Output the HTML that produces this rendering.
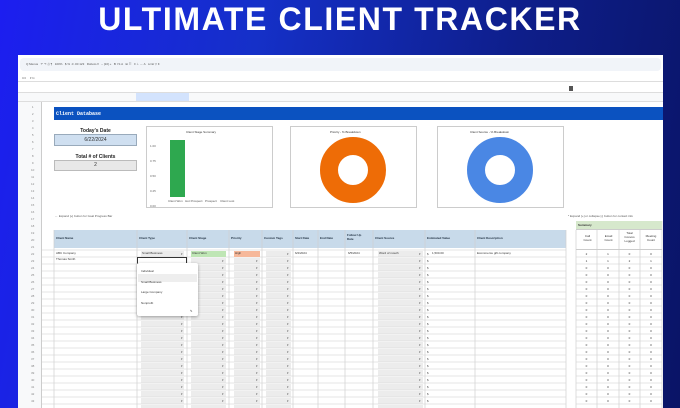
<!DOCTYPE html>
<html><head><style>
*{margin:0;padding:0;box-sizing:border-box}
body{width:680px;height:408px;overflow:hidden;position:relative;font-family:"Liberation Sans",sans-serif;background:linear-gradient(100deg,#1c1ef0 0%,#1530c8 35%,#0e1e8a 70%,#0a1466 100%)}
.a{position:absolute}
.t{font-size:3px;color:#333;white-space:nowrap}
.g{background:repeating-linear-gradient(#ececec 0 6px,#fff 6px 7px)}
</style></head><body>
<div class="a" style="left:0;top:1px;width:680px;text-align:center;color:#fff;font-weight:bold;font-size:32px;letter-spacing:1.6px">ULTIMATE CLIENT TRACKER</div>
<div class="a" style="left:18px;top:55px;width:645px;height:353px;background:#fff"></div>
<div class="a" style="left:20px;top:58px;width:641px;height:13px;background:#f1f4f9;border-radius:4px"></div>
<div class="a t" style="left:26px;top:62px;color:#555">Q Menus &nbsp; ↶ ↷ ⎙ ¶ &nbsp; 100% &nbsp; $ % .0 .00 123 &nbsp; Roboto ▾ &nbsp; − [10] + &nbsp; B I S A &nbsp; ⊞ ☷ &nbsp; ≡ ⊥ ⇔ A &nbsp; ⊟ ⊞ ▽ Σ</div>
<div class="a t" style="left:22px;top:76px;color:#666">C3 &nbsp;&nbsp;&nbsp; ▾ fx</div>
<div class="a" style="left:18px;top:81px;width:645px;height:1px;background:#ddd"></div>
<div class="a" style="left:18px;top:92px;width:645px;height:10px;background:#f8f9fa;border-top:1px solid #ddd;border-bottom:1px solid #ddd"></div>
<div class="a" style="left:136px;top:93px;width:53px;height:8px;background:#d3e3fd"></div>
<div class="a" style="left:18px;top:102px;width:24px;height:306px;background:#f8f9fa;border-right:1px solid #ccc"></div>
<div class="a t" style="left:31px;top:104px;color:#888;line-height:7px;text-align:center">1<br>2<br>3<br>4<br>5<br>6<br>7<br>8<br>9<br>10<br>11<br>12<br>13<br>14<br>15<br>16<br>17<br>18<br>19<br>20<br>21<br>22<br>23<br>24<br>25<br>26<br>27<br>28<br>29<br>30<br>31<br>32<br>33<br>34<br>35<br>36<br>37<br>38<br>39<br>40<br>41<br>42<br>43</div>
<div class="a" style="left:569px;top:86px;width:4px;height:5px;background:#555"></div>
<div class="a" style="left:54px;top:107px;width:609px;height:13px;background:#0b52c0"></div>
<div class="a" style="left:56px;top:111px;font-size:5px;font-weight:bold;color:#fff;font-family:'Liberation Mono',monospace">Client Database</div>
<div class="a" style="left:54px;top:128px;width:83px;text-align:center;font-size:5px;font-weight:bold;color:#222">Today's Date</div>
<div class="a" style="left:54px;top:134px;width:83px;height:12px;background:#cfdff0;border:1px solid #9ab;text-align:center;font-size:5px;line-height:10px;color:#333">6/22/2024</div>
<div class="a" style="left:54px;top:154px;width:83px;text-align:center;font-size:5px;font-weight:bold;color:#222">Total # of Clients</div>
<div class="a" style="left:54px;top:160px;width:83px;height:11px;background:#e8e8e8;border:1px solid #bbb;text-align:center;font-size:5px;line-height:9px;color:#333">2</div>
<div class="a" style="left:146px;top:126px;width:127px;height:82px;border:1px solid #ccc"></div>
<div class="a t" style="left:186px;top:130px">Client Stage Summary</div>
<div class="a t" style="left:150px;top:139px;line-height:15px;color:#666">1.00<br>0.75<br>0.50<br>0.25<br>0.00</div>
<div class="a" style="left:170px;top:140px;width:15px;height:57px;background:#2ea84f"></div>
<div class="a t" style="left:168px;top:199px;color:#555">Client Won &nbsp; Hot Prospect &nbsp; Prospect &nbsp;&nbsp; Client Lost</div>
<div class="a" style="left:290px;top:126px;width:127px;height:82px;border:1px solid #ccc"></div>
<div class="a t" style="left:330px;top:130px">Priority - % Breakdown</div>
<div class="a" style="left:320px;top:137px;width:66px;height:66px;border-radius:50%;border:18px solid #ee6c06"></div>
<div class="a" style="left:437px;top:126px;width:127px;height:82px;border:1px solid #ccc"></div>
<div class="a t" style="left:470px;top:130px">Client Source - % Breakdown</div>
<div class="a" style="left:467px;top:137px;width:66px;height:66px;border-radius:50%;border:18px solid #4a87e4"></div>
<div class="a t" style="left:55px;top:214px;color:#555">← Expand [+] button for Goal Progress Bar</div>
<div class="a t" style="left:568px;top:214px;color:#555">* Expand [+] or collapse [-] button for contact info</div>
<div class="a" style="left:54px;top:230px;width:512px;height:18px;background:#c8daea"></div>
<div class="a g" style="left:141px;top:251px;width:43px;height:157px"></div>
<div class="a g" style="left:191px;top:251px;width:35px;height:157px"></div>
<div class="a g" style="left:234px;top:251px;width:26px;height:157px"></div>
<div class="a g" style="left:266px;top:251px;width:25px;height:157px"></div>
<div class="a g" style="left:378px;top:251px;width:45px;height:157px"></div>
<svg class="a" style="left:0;top:0" width="680" height="408">
<g stroke="#dcdcdc" stroke-width="0.7" id="h">
<line x1="42" y1="250" x2="566" y2="250"/><line x1="42" y1="257" x2="566" y2="257"/><line x1="42" y1="264" x2="566" y2="264"/><line x1="42" y1="271" x2="566" y2="271"/><line x1="42" y1="278" x2="566" y2="278"/><line x1="42" y1="285" x2="566" y2="285"/><line x1="42" y1="292" x2="566" y2="292"/><line x1="42" y1="299" x2="566" y2="299"/><line x1="42" y1="306" x2="566" y2="306"/><line x1="42" y1="313" x2="566" y2="313"/><line x1="42" y1="320" x2="566" y2="320"/><line x1="42" y1="327" x2="566" y2="327"/><line x1="42" y1="334" x2="566" y2="334"/><line x1="42" y1="341" x2="566" y2="341"/><line x1="42" y1="348" x2="566" y2="348"/><line x1="42" y1="355" x2="566" y2="355"/><line x1="42" y1="362" x2="566" y2="362"/><line x1="42" y1="369" x2="566" y2="369"/><line x1="42" y1="376" x2="566" y2="376"/><line x1="42" y1="383" x2="566" y2="383"/><line x1="42" y1="390" x2="566" y2="390"/><line x1="42" y1="397" x2="566" y2="397"/><line x1="42" y1="404" x2="566" y2="404"/>
<line x1="576" y1="257" x2="662" y2="257"/><line x1="576" y1="264" x2="662" y2="264"/><line x1="576" y1="271" x2="662" y2="271"/><line x1="576" y1="278" x2="662" y2="278"/><line x1="576" y1="285" x2="662" y2="285"/><line x1="576" y1="292" x2="662" y2="292"/><line x1="576" y1="299" x2="662" y2="299"/><line x1="576" y1="306" x2="662" y2="306"/><line x1="576" y1="313" x2="662" y2="313"/><line x1="576" y1="320" x2="662" y2="320"/><line x1="576" y1="327" x2="662" y2="327"/><line x1="576" y1="334" x2="662" y2="334"/><line x1="576" y1="341" x2="662" y2="341"/><line x1="576" y1="348" x2="662" y2="348"/><line x1="576" y1="355" x2="662" y2="355"/><line x1="576" y1="362" x2="662" y2="362"/><line x1="576" y1="369" x2="662" y2="369"/><line x1="576" y1="376" x2="662" y2="376"/><line x1="576" y1="383" x2="662" y2="383"/><line x1="576" y1="390" x2="662" y2="390"/><line x1="576" y1="397" x2="662" y2="397"/><line x1="576" y1="404" x2="662" y2="404"/>
</g>
<g stroke="#d0d0d0" stroke-width="0.7">
<line x1="54" y1="230" x2="54" y2="408"/><line x1="137" y1="230" x2="137" y2="408"/><line x1="187" y1="230" x2="187" y2="408"/><line x1="229" y1="230" x2="229" y2="408"/><line x1="262" y1="230" x2="262" y2="408"/><line x1="293" y1="230" x2="293" y2="408"/><line x1="318" y1="230" x2="318" y2="408"/><line x1="345" y1="230" x2="345" y2="408"/><line x1="373" y1="230" x2="373" y2="408"/><line x1="425" y1="230" x2="425" y2="408"/><line x1="475" y1="230" x2="475" y2="408"/><line x1="566" y1="230" x2="566" y2="408"/>
<line x1="576" y1="230" x2="576" y2="408"/><line x1="597" y1="230" x2="597" y2="408"/><line x1="619" y1="230" x2="619" y2="408"/><line x1="640" y1="230" x2="640" y2="408"/><line x1="662" y1="221" x2="662" y2="408"/>
</g>
</svg>
<div class="a t" style="left:181px;top:251px;line-height:7px;color:#555">▾<br>▾<br>▾<br>▾<br>▾<br>▾<br>▾<br>▾<br>▾<br>▾<br>▾<br>▾<br>▾<br>▾<br>▾<br>▾<br>▾<br>▾<br>▾<br>▾<br>▾<br>▾</div>
<div class="a t" style="left:222px;top:251px;line-height:7px;color:#555">▾<br>▾<br>▾<br>▾<br>▾<br>▾<br>▾<br>▾<br>▾<br>▾<br>▾<br>▾<br>▾<br>▾<br>▾<br>▾<br>▾<br>▾<br>▾<br>▾<br>▾<br>▾</div>
<div class="a t" style="left:256px;top:251px;line-height:7px;color:#555">▾<br>▾<br>▾<br>▾<br>▾<br>▾<br>▾<br>▾<br>▾<br>▾<br>▾<br>▾<br>▾<br>▾<br>▾<br>▾<br>▾<br>▾<br>▾<br>▾<br>▾<br>▾</div>
<div class="a t" style="left:287px;top:251px;line-height:7px;color:#555">▾<br>▾<br>▾<br>▾<br>▾<br>▾<br>▾<br>▾<br>▾<br>▾<br>▾<br>▾<br>▾<br>▾<br>▾<br>▾<br>▾<br>▾<br>▾<br>▾<br>▾<br>▾</div>
<div class="a t" style="left:419px;top:251px;line-height:7px;color:#555">▾<br>▾<br>▾<br>▾<br>▾<br>▾<br>▾<br>▾<br>▾<br>▾<br>▾<br>▾<br>▾<br>▾<br>▾<br>▾<br>▾<br>▾<br>▾<br>▾<br>▾<br>▾</div>
<div class="a t" style="left:427px;top:251px;line-height:7px;color:#555">$<br>$<br>$<br>$<br>$<br>$<br>$<br>$<br>$<br>$<br>$<br>$<br>$<br>$<br>$<br>$<br>$<br>$<br>$<br>$<br>$<br>$</div>
<div class="a" style="left:191px;top:251px;width:35px;height:6px;background:#bfe6b5"></div>
<div class="a" style="left:234px;top:251px;width:26px;height:6px;background:#f6b89a"></div>
<div class="a" style="left:137px;top:257px;width:50px;height:7px;background:#fff;border:1px solid #333"></div>
<div class="a t" style="left:56px;top:236px;font-weight:bold;color:#234">Client Name</div>
<div class="a t" style="left:139px;top:236px;font-weight:bold;color:#234">Client Type</div>
<div class="a t" style="left:189px;top:236px;font-weight:bold;color:#234">Client Stage</div>
<div class="a t" style="left:231px;top:236px;font-weight:bold;color:#234">Priority</div>
<div class="a t" style="left:264px;top:236px;font-weight:bold;color:#234">Custom Tags</div>
<div class="a t" style="left:295px;top:236px;font-weight:bold;color:#234">Start Date</div>
<div class="a t" style="left:320px;top:236px;font-weight:bold;color:#234">End Date</div>
<div class="a t" style="left:347px;top:233px;font-weight:bold;color:#234">Follow Up<br>Date</div>
<div class="a t" style="left:375px;top:236px;font-weight:bold;color:#234">Client Source</div>
<div class="a t" style="left:427px;top:236px;font-weight:bold;color:#234">Estimated Value</div>
<div class="a t" style="left:477px;top:236px;font-weight:bold;color:#234">Client Description</div>
<div class="a t" style="left:56px;top:251px">ABC Company</div>
<div class="a t" style="left:56px;top:257px">Thomas Smith</div>
<div class="a t" style="left:142px;top:251px">Small Business</div>
<div class="a t" style="left:192px;top:251px">Client Won</div>
<div class="a t" style="left:235px;top:251px">High</div>
<div class="a t" style="left:295px;top:251px">6/2/2024</div>
<div class="a t" style="left:348px;top:251px">6/5/2024</div>
<div class="a t" style="left:379px;top:251px">Word of mouth</div>
<div class="a t" style="left:432px;top:251px">1,500.00</div>
<div class="a t" style="left:477px;top:251px">Ecommerce gift company</div>
<div class="a" style="left:137px;top:263px;width:61px;height:53px;background:#fff;box-shadow:0 1px 3px rgba(0,0,0,.35);border-radius:2px"></div>
<div class="a" style="left:138px;top:274px;width:59px;height:8px;background:#eee"></div>
<div class="a t" style="left:141px;top:266px;line-height:10.5px">Individual<br>Small Business<br>Large Company<br>Nonprofit</div>
<div class="a t" style="left:190px;top:309px">✎</div>
<div class="a" style="left:576px;top:221px;width:86px;height:8px;background:#d6e8cc"></div>
<div class="a t" style="left:578px;top:223px;font-weight:bold">Summary</div>
<div class="a t" style="left:578px;top:234px;width:19px;text-align:center">Call<br>Count</div>
<div class="a t" style="left:598px;top:234px;width:21px;text-align:center">Email<br>Count</div>
<div class="a t" style="left:619px;top:231px;width:21px;text-align:center">Total<br>Convos<br>Logged</div>
<div class="a t" style="left:640px;top:234px;width:22px;text-align:center">Meeting<br>Count</div>
<div class="a" style="left:576px;top:229px;width:86px;height:1px;background:#ccc"></div>
<div class="a" style="left:576px;top:249px;width:86px;height:1px;background:#ccc"></div>
<div class="a t" style="left:576px;top:251px;width:21px;text-align:center;line-height:7px">2<br>1<br>0<br>0<br>0<br>0<br>0<br>0<br>0<br>0<br>0<br>0<br>0<br>0<br>0<br>0<br>0<br>0<br>0<br>0<br>0<br>0</div>
<div class="a t" style="left:597px;top:251px;width:22px;text-align:center;line-height:7px">1<br>1<br>0<br>0<br>0<br>0<br>0<br>0<br>0<br>0<br>0<br>0<br>0<br>0<br>0<br>0<br>0<br>0<br>0<br>0<br>0<br>0</div>
<div class="a t" style="left:619px;top:251px;width:21px;text-align:center;line-height:7px">0<br>2<br>0<br>0<br>0<br>0<br>0<br>0<br>0<br>0<br>0<br>0<br>0<br>0<br>0<br>0<br>0<br>0<br>0<br>0<br>0<br>0</div>
<div class="a t" style="left:640px;top:251px;width:22px;text-align:center;line-height:7px">0<br>1<br>0<br>0<br>0<br>0<br>0<br>0<br>0<br>0<br>0<br>0<br>0<br>0<br>0<br>0<br>0<br>0<br>0<br>0<br>0<br>0</div>
</body></html>
